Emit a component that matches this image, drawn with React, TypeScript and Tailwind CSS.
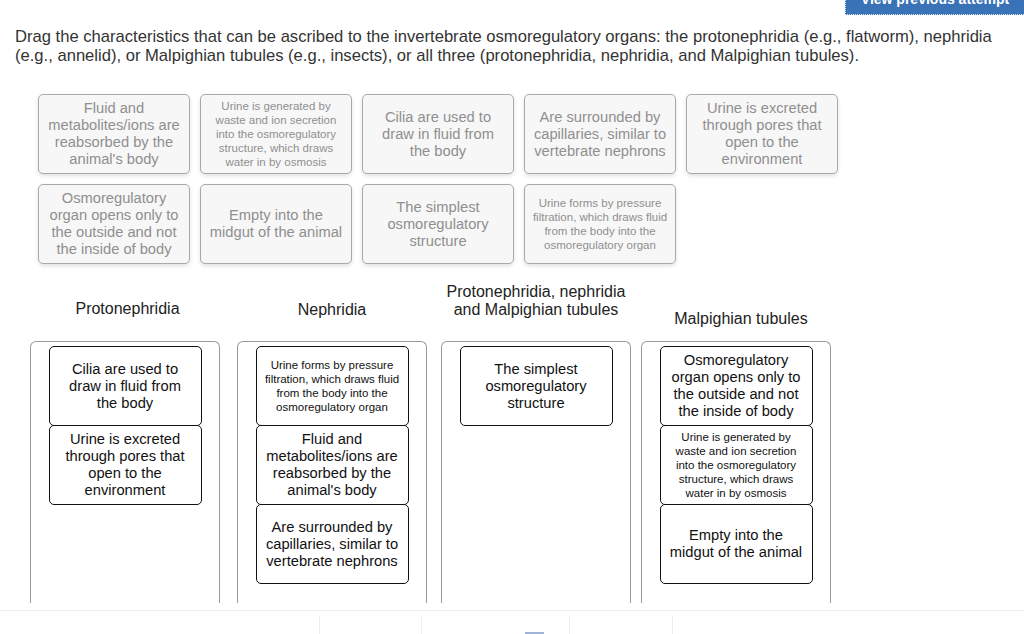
import React from "react";

type Card = { lines: string[]; small?: boolean };

const source: Card[][] = [
  [
    { lines: ["Fluid and", "metabolites/ions are", "reabsorbed by the", "animal's body"] },
    {
      lines: ["Urine is generated by", "waste and ion secretion", "into the osmoregulatory", "structure, which draws", "water in by osmosis"],
      small: true,
    },
    { lines: ["Cilia are used to", "draw in fluid from", "the body"] },
    { lines: ["Are surrounded by", "capillaries, similar to", "vertebrate nephrons"] },
    { lines: ["Urine is excreted", "through pores that", "open to the", "environment"] },
  ],
  [
    { lines: ["Osmoregulatory", "organ opens only to", "the outside and not", "the inside of body"] },
    { lines: ["Empty into the", "midgut of the animal"] },
    { lines: ["The simplest", "osmoregulatory", "structure"] },
    {
      lines: ["Urine forms by pressure", "filtration, which draws fluid", "from the body into the", "osmoregulatory organ"],
      small: true,
    },
  ],
];

const cols: { title: string[]; titleClass: string; boxClass: string; cards: Card[] }[] = [
  {
    title: ["Protonephridia"],
    titleClass: "pt-[20px] pl-[5px]",
    boxClass: "ml-[30px]",
    cards: [
      { lines: ["Cilia are used to", "draw in fluid from", "the body"] },
      { lines: ["Urine is excreted", "through pores that", "open to the", "environment"] },
    ],
  },
  {
    title: ["Nephridia"],
    titleClass: "pt-[21px]",
    boxClass: "ml-[17px]",
    cards: [
      {
        lines: ["Urine forms by pressure", "filtration, which draws fluid", "from the body into the", "osmoregulatory organ"],
        small: true,
      },
      { lines: ["Fluid and", "metabolites/ions are", "reabsorbed by the", "animal's body"] },
      { lines: ["Are surrounded by", "capillaries, similar to", "vertebrate nephrons"] },
    ],
  },
  {
    title: ["Protonephridia, nephridia", "and Malpighian tubules"],
    titleClass: "pt-[3px]",
    boxClass: "ml-[14px]",
    cards: [{ lines: ["The simplest", "osmoregulatory", "structure"] }],
  },
  {
    title: ["Malpighian tubules"],
    titleClass: "pt-[30px] pl-[10px]",
    boxClass: "ml-[10px]",
    cards: [
      { lines: ["Osmoregulatory", "organ opens only to", "the outside and not", "the inside of body"] },
      {
        lines: ["Urine is generated by", "waste and ion secretion", "into the osmoregulatory", "structure, which draws", "water in by osmosis"],
        small: true,
      },
      { lines: ["Empty into the", "midgut of the animal"] },
    ],
  },
];

function CardText({ card }: { card: Card }) {
  return (
    <div className={card.small ? "text-[11.5px] leading-[14px]" : "text-[14.7px] leading-[17px]"}>
      {card.lines.map((l, i) => (
        <div key={i} className="whitespace-nowrap">
          {l}
        </div>
      ))}
    </div>
  );
}

export default function App() {
  return (
    <div
      className="w-[1024px] h-[634px] overflow-hidden bg-white flex flex-col"
      style={{ fontFamily: '"Liberation Sans", Arial, sans-serif' }}
    >
      {/* top bar */}
      <div className="h-[15px] flex justify-end shrink-0">
        <div className="w-[179px] h-[15px] bg-[#3a72b8] border-l border-b border-dotted border-[#dfe8f5] overflow-hidden flex justify-center">
          <span className="text-white font-bold text-[14px] leading-[14px] -mt-[8px] whitespace-nowrap">
            View previous attempt
          </span>
        </div>
      </div>

      {/* instructions */}
      <div className="mt-[12px] px-[15px] text-[16.6px] leading-[19px] text-[#333] shrink-0">
        <div className="whitespace-nowrap">
          Drag the characteristics that can be ascribed to the invertebrate osmoregulatory organs: the protonephridia (e.g., flatworm), nephridia
        </div>
        <div className="whitespace-nowrap">
          (e.g., annelid), or Malpighian tubules (e.g., insects), or all three (protonephridia, nephridia, and Malpighian tubules).
        </div>
      </div>

      {/* source cards */}
      <div className="mt-[29px] ml-[38px] flex flex-col gap-[10px] shrink-0">
        {source.map((row, ri) => (
          <div key={ri} className="flex gap-[10px]">
            {row.map((c, ci) => (
              <div
                key={ci}
                className="w-[152px] h-[80px] rounded-[5px] border border-[#a9a9a9] bg-[#f7f7f7] shadow-[0_2px_4px_rgba(0,0,0,0.12)] flex items-center justify-center text-center text-[#8f8f8f]"
              >
                <CardText card={c} />
              </div>
            ))}
          </div>
        ))}
      </div>

      {/* drop columns */}
      <div className="mt-[16px] h-[323px] overflow-hidden flex shrink-0">
        {cols.map((col, i) => (
          <div key={i} className={`w-[190px] shrink-0 flex flex-col ${col.boxClass}`}>
            <div className={`h-[61px] shrink-0 text-center text-[16px] leading-[18px] text-[#222] ${col.titleClass}`}>
              {col.title.map((t, ti) => (
                <div key={ti} className="whitespace-nowrap">
                  {t}
                </div>
              ))}
            </div>
            <div className="h-[300px] shrink-0 border border-b-0 border-[#9a9a9a] rounded-t-[6px] pt-[4px] flex flex-col items-center">
              {col.cards.map((c, ci) => (
                <div
                  key={ci}
                  className={`w-[153px] h-[80px] shrink-0 rounded-[5px] border border-[#111] bg-white flex items-center justify-center text-center text-[#111] ${
                    ci > 0 ? "-mt-px" : ""
                  }`}
                >
                  <CardText card={c} />
                </div>
              ))}
            </div>
          </div>
        ))}
      </div>

      {/* footer */}
      <div className="mt-[7px] border-t border-[#ececec] flex-1 flex">
        <div className="w-[319px]" />
        <div className="w-[102px] mt-[5px] border-l border-[#ededed]" />
        <div className="w-[148px] mt-[5px] border-l border-[#ededed] relative">
          <div className="absolute left-[103px] bottom-0 w-[19px] h-[2px] bg-[#9db4d6]" />
        </div>
        <div className="w-[103px] mt-[5px] border-l border-[#ededed]" />
        <div className="flex-1 mt-[5px] border-l border-[#ededed]" />
      </div>
    </div>
  );
}
